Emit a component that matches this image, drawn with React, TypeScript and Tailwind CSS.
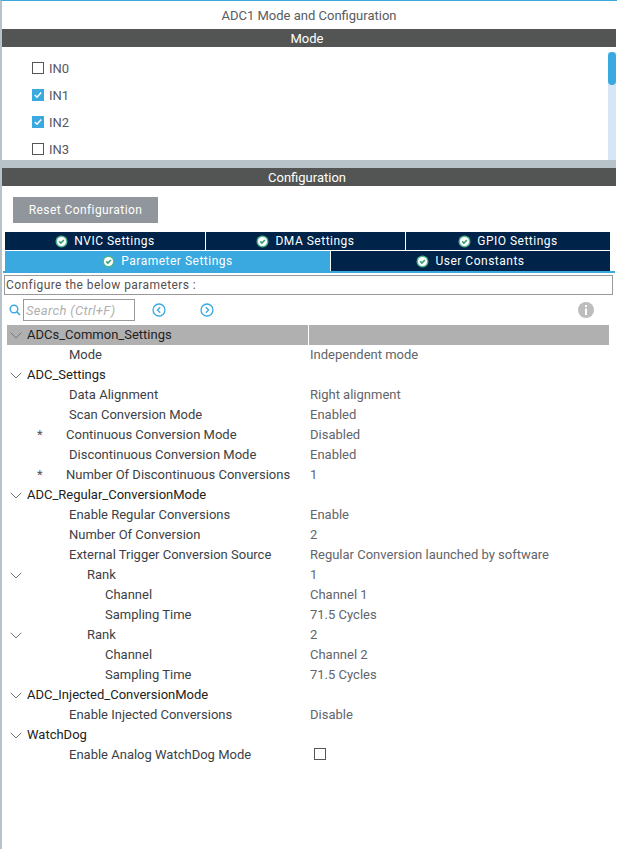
type Row = {
  label: string;
  value?: string;
  depth: number; // 0 = group header, 1 = param, 2 = rank, 3 = rank child
  star?: boolean;
  group?: boolean;
  check?: boolean;
};

const rows: Row[] = [
  { label: "ADC_Settings", depth: 0, group: true },
  { label: "Data Alignment", value: "Right alignment", depth: 1 },
  { label: "Scan Conversion Mode", value: "Enabled", depth: 1 },
  { label: "Continuous Conversion Mode", value: "Disabled", depth: 1, star: true },
  { label: "Discontinuous Conversion Mode", value: "Enabled", depth: 1 },
  { label: "Number Of Discontinuous Conversions", value: "1", depth: 1, star: true },
  { label: "ADC_Regular_ConversionMode", depth: 0, group: true },
  { label: "Enable Regular Conversions", value: "Enable", depth: 1 },
  { label: "Number Of Conversion", value: "2", depth: 1 },
  { label: "External Trigger Conversion Source", value: "Regular Conversion launched by software", depth: 1 },
  { label: "Rank", value: "1", depth: 2, group: true },
  { label: "Channel", value: "Channel 1", depth: 3 },
  { label: "Sampling Time", value: "71.5 Cycles", depth: 3 },
  { label: "Rank", value: "2", depth: 2, group: true },
  { label: "Channel", value: "Channel 2", depth: 3 },
  { label: "Sampling Time", value: "71.5 Cycles", depth: 3 },
  { label: "ADC_Injected_ConversionMode", depth: 0, group: true },
  { label: "Enable Injected Conversions", value: "Disable", depth: 1 },
  { label: "WatchDog", depth: 0, group: true },
  { label: "Enable Analog WatchDog Mode", depth: 1, check: true },
];

function Chevron() {
  return (
    <svg width="12" height="7" viewBox="0 0 12 7" className="absolute left-[3px] top-[7px]">
      <path d="M0.7 0.7 L6 6 L11.3 0.7" fill="none" stroke="#777" strokeWidth="1" />
    </svg>
  );
}

function OkIcon() {
  return (
    <svg width="13" height="13" viewBox="0 0 13 13" className="shrink-0">
      <circle cx="6.5" cy="6.5" r="6" fill="#4fb58b" />
      <circle cx="6.5" cy="6.5" r="4.6" fill="#ffffff" />
      <path d="M4.2 6.4 L5.9 8.1 L8.9 5" fill="none" stroke="#3a9e76" strokeWidth="1.6" />
    </svg>
  );
}

function Tab({ label, className }: { label: string; className: string }) {
  return (
    <div className={`flex items-center justify-center gap-[6px] text-white text-[12px] tracking-[0.5px] ${className}`}>
      <OkIcon />
      <span>{label}</span>
    </div>
  );
}

function CheckItem({ label, checked }: { label: string; checked?: boolean }) {
  return (
    <div className="h-[27px] flex items-center gap-[5px]">
      {checked ? (
        <div className="w-3 h-3 bg-[#39a9e0] flex items-center justify-center">
          <svg width="10" height="10" viewBox="0 0 10 10">
            <path d="M1.8 5 L4 7.2 L8.2 2.4" fill="none" stroke="#ffffff" strokeWidth="1.5" />
          </svg>
        </div>
      ) : (
        <div className="w-3 h-3 border border-[#555]" />
      )}
      <span className="text-[#56585f] pt-px">{label}</span>
    </div>
  );
}

function Arrow({ left }: { left: boolean }) {
  return (
    <svg width="14" height="14" viewBox="0 0 14 14">
      <circle cx="7" cy="7" r="6" fill="none" stroke="#39a9e0" strokeWidth="1.3" />
      <path d={left ? "M8.2 4.2 L5.4 7 L8.2 9.8" : "M5.8 4.2 L8.6 7 L5.8 9.8"} fill="none" stroke="#39a9e0" strokeWidth="1.3" />
    </svg>
  );
}

function TreeRow({ row }: { row: Row }) {
  const indent = { 0: "pl-[20px]", 1: "pl-[62px]", 2: "pl-[80px]", 3: "pl-[98px]" }[row.depth];
  return (
    <div className="relative h-5 pb-[2px] flex items-center">
      {row.group && <Chevron />}
      {row.star && <span className="absolute left-[30px] top-[3px] text-[#555]">*</span>}
      <div className={`w-[303px] shrink-0 whitespace-nowrap ${row.star ? "pl-[59px]" : indent} ${row.depth === 0 ? "text-[#222]" : "text-[#3c3f46]"}`}>
        {row.label}
      </div>
      {row.check ? (
        <div className="ml-[4px] w-3 h-3 border border-[#555]" />
      ) : (
        <div className="text-[#62656b] whitespace-nowrap">{row.value}</div>
      )}
    </div>
  );
}

export default function App() {
  return (
    <div className="w-[617px] h-[849px] overflow-hidden bg-white border-t border-l-2 border-t-[#39a9e0] border-l-[#b7c3c9] pr-px text-[13px] leading-none font-['Roboto',sans-serif]">
      <div className="h-[28px] bg-white flex items-center justify-center text-[#585b61] pt-[1px]">
        ADC1 Mode and Configuration
      </div>
      <div className="h-[18px] bg-[#535554] flex items-center justify-center text-white pr-[4px] pt-px">Mode</div>

      {/* Mode list */}
      <div className="relative h-[113px] bg-white pl-[30px] pt-[7px] overflow-hidden">
        <CheckItem label="IN0" />
        <CheckItem label="IN1" checked />
        <CheckItem label="IN2" checked />
        <CheckItem label="IN3" />
        <div className="absolute right-0 top-[5px] bottom-0 w-2 bg-[#d6e6f5]">
          <div className="h-[33px] bg-[#39a9e0] rounded-[4px]" />
        </div>
      </div>

      <div className="h-2 bg-[#b7c3c9]" />
      <div className="h-[18px] bg-[#535554] flex items-center justify-center text-white pr-[4px] pt-px">Configuration</div>

      <div className="h-[662px] bg-white pt-[11px]">
        <div className="ml-[11px] w-[145px] h-[26px] bg-[#90969b] text-white text-[12px] flex items-center justify-center tracking-[0.42px]">
          Reset Configuration
        </div>

        {/* Tabs */}
        <div className="ml-[3px] mr-[6px] mt-[9px] flex gap-px h-[18px]">
          <Tab label="NVIC Settings" className="w-[200px] bg-[#002349]" />
          <Tab label="DMA Settings" className="w-[199px] bg-[#002349]" />
          <Tab label="GPIO Settings" className="flex-1 bg-[#002349]" />
        </div>
        <div className="ml-[3px] mr-[6px] mt-px flex gap-px h-[20px]">
          <Tab label="Parameter Settings" className="w-[325px] bg-[#39a9e0]" />
          <Tab label="User Constants" className="flex-1 bg-[#002349]" />
        </div>
        <div className="ml-px mr-[1px] h-[2px] bg-[#39a9e0]" />

        <div className="ml-[2px] mr-[3px] mt-[2px] h-5 border border-[#999] flex items-center pl-[1px] text-[12px] text-[#55504f] tracking-[0.42px] bg-white">
          Configure the below parameters :
        </div>

        {/* Search row */}
        <div className="h-[24px] mt-[3px] flex items-center">
          <svg width="12" height="12" viewBox="0 0 12 12" className="ml-[7px] shrink-0">
            <circle cx="5" cy="5" r="3.8" fill="none" stroke="#39a9e0" strokeWidth="1.4" />
            <path d="M7.8 7.8 L11 11" stroke="#39a9e0" strokeWidth="1.6" />
          </svg>
          <div className="ml-[2px] w-[112px] h-[22px] border border-[#999] flex items-center pl-[2px] italic text-[#b0b0b0] tracking-[0.33px]">
            Search (Ctrl+F)
          </div>
          <div className="ml-[17px] flex gap-[34px]">
            <Arrow left />
            <Arrow left={false} />
          </div>
          <svg width="16" height="16" viewBox="0 0 16 16" className="ml-auto mr-[22px]">
            <circle cx="8" cy="8" r="8" fill="#bdbdbd" />
            <rect x="7" y="3" width="2" height="2" fill="#ffffff" />
            <rect x="7" y="6.5" width="2" height="6.5" fill="#ffffff" />
          </svg>
        </div>

        {/* Parameter tree */}
        <div className="ml-[5px] mr-[7px] mt-[3px]">
          <div className="relative h-5 flex items-center gap-px bg-white">
            <div className="w-[301px] h-full bg-[#b0b0b0] flex items-center pb-[2px] pl-[20px] text-[#222]">ADCs_Common_Settings</div>
            <div className="flex-1 h-full bg-[#b0b0b0]" />
            <Chevron />
          </div>
          <div className="h-5 pb-[2px] flex items-center">
            <div className="w-[303px] pl-[62px] text-[#3c3f46]">Mode</div>
            <div className="text-[#62656b]">Independent mode</div>
          </div>
          {rows.map((row, i) => (
            <TreeRow key={i} row={row} />
          ))}
        </div>
      </div>
    </div>
  );
}
